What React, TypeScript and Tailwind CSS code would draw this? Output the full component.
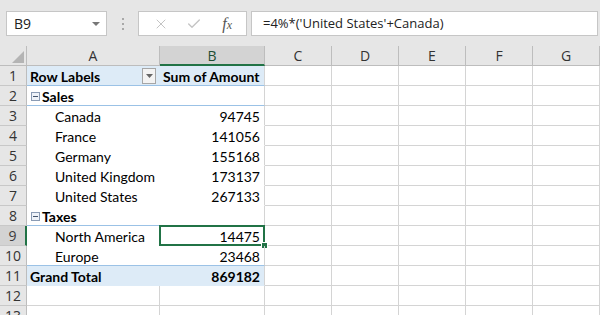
import { X, Check } from "lucide-react"

const cols = [
    { key: "A", w: "w-[133px]" },
    { key: "B", w: "w-[105px]" },
    { key: "C", w: "w-[67px]" },
    { key: "D", w: "w-[67px]" },
    { key: "E", w: "w-[67px]" },
    { key: "F", w: "w-[67px]" },
    { key: "G", w: "w-[67px]" },
]

type Row = {
    n: number
    label?: string
    value?: string
    kind: "head" | "group" | "item" | "total" | "empty"
    line?: boolean
}

const rows: Row[] = [
    { n: 1, label: "Row Labels", value: "Sum of Amount", kind: "head", line: true },
    { n: 2, label: "Sales", kind: "group", line: true },
    { n: 3, label: "Canada", value: "94745", kind: "item" },
    { n: 4, label: "France", value: "141056", kind: "item" },
    { n: 5, label: "Germany", value: "155168", kind: "item" },
    { n: 6, label: "United Kingdom", value: "173137", kind: "item" },
    { n: 7, label: "United States", value: "267133", kind: "item" },
    { n: 8, label: "Taxes", kind: "group", line: true },
    { n: 9, label: "North America", value: "14475", kind: "item" },
    { n: 10, label: "Europe", value: "23468", kind: "item", line: true },
    { n: 11, label: "Grand Total", value: "869182", kind: "total" },
    { n: 12, kind: "empty" },
    { n: 13, kind: "empty" },
]

const cellFont = "font-['Lato','Noto_Sans',sans-serif] text-[14px] text-black whitespace-nowrap"

function Collapse() {
    return (
        <span className="inline-flex items-center justify-center w-[9px] h-[9px] border border-[#8a9bb4] bg-[#eef2f8] mr-[2px] mt-[1px]">
            <span className="block w-[5px] h-px bg-[#45556c]" />
        </span>
    )
}

function FilterButton() {
    return (
        <span className="ml-auto mr-[4px] w-[14px] h-[16px] border border-[#a6a6a6] bg-[#f3f3f3] flex items-center justify-center">
            <svg width="7" height="4" viewBox="0 0 7 4"><path d="M0 0h7L3.5 4z" fill="#666" /></svg>
        </span>
    )
}

function SheetRow({ row }: { row: Row }) {
    const selected = row.n === 9
    const pivot = row.kind !== "empty"
    const blue = row.kind === "head" || row.kind === "total"
    const pivotBorder = row.line ? "border-b border-[#9bc2e6]" : pivot ? "border-b border-transparent" : "border-b border-[#d4d4d4]"
    const bold = row.kind !== "item" ? "font-bold" : ""

    return (
        <div className="flex h-[20px] shrink-0">
            <div className={`w-[27px] shrink-0 flex items-center justify-center border-b border-[#c8c8c8] font-['Open_Sans',sans-serif] text-[14px] ${selected ? "bg-[#d3d3d3] text-[#3c3c3c] border-r-2 border-r-[#217346]" : "bg-[#e6e6e6] text-[#333] border-r border-r-[#bdbdbd]"}`}>
                {row.n}
            </div>
            <div className={`w-[133px] shrink-0 flex items-center pt-[1px] ${pivotBorder} ${pivot ? "" : "border-r border-r-[#d4d4d4]"} ${blue ? "bg-[#ddebf7]" : ""} ${cellFont} ${bold}`}>
                {row.kind === "head" && <><span className="pl-[3px]">{row.label}</span><FilterButton /></>}
                {row.kind === "group" && <span className="pl-[4px] flex items-center"><Collapse />{row.label}</span>}
                {row.kind === "item" && <span className="pl-[28px]">{row.label}</span>}
                {row.kind === "total" && <span className="pl-[3px]">{row.label}</span>}
            </div>
            <div className={`relative w-[105px] shrink-0 flex items-center pt-[1px] border-r border-r-[#d4d4d4] ${pivotBorder} ${blue ? "bg-[#ddebf7]" : ""} ${cellFont} ${bold} ${row.kind === "head" ? "justify-start pl-[3px]" : "justify-end pr-[4px]"}`}>
                {row.value}
                {selected && (
                    <>
                        <div className="absolute left-[-1px] top-[-1px] right-[-1px] bottom-[-1px] border-2 border-[#217346]" />
                        <div className="absolute right-[-4px] bottom-[-4px] w-[7px] h-[7px] bg-[#217346] border border-white" />
                    </>
                )}
            </div>
            {cols.slice(2).map(c => (
                <div key={c.key} className={`${c.w} shrink-0 border-r border-b border-[#d4d4d4]`} />
            ))}
        </div>
    )
}

export default function App() {
    return (
        <div className="w-[600px] h-[315px] overflow-hidden bg-white select-none flex flex-col">
            <div className="h-[46px] shrink-0 bg-[#e6e6e6] flex items-start pt-[11px] font-['Open_Sans',sans-serif]">
                <div className="ml-[6px] w-[101px] h-[25px] bg-white border border-[#c6c6c6] flex items-center">
                    <span className="pl-[7px] text-[14px] text-[#222]">B9</span>
                    <svg className="ml-auto mr-[6px]" width="8" height="4" viewBox="0 0 8 4"><path d="M0 0h8L4 4z" fill="#777" /></svg>
                </div>
                <div className="w-[31px] h-[25px] flex flex-col items-center justify-center gap-[3px]">
                    <span className="w-[2px] h-[2px] bg-[#a8a8a8]" />
                    <span className="w-[2px] h-[2px] bg-[#a8a8a8]" />
                    <span className="w-[2px] h-[2px] bg-[#a8a8a8]" />
                </div>
                <div className="w-[109px] h-[25px] bg-white border border-[#c6c6c6] flex items-center">
                    <X className="ml-[14px] text-[#c4c4c4]" size={16} strokeWidth={1.5} />
                    <Check className="ml-[17px] text-[#c4c4c4]" size={16} strokeWidth={2} />
                    <span className="ml-auto mr-[14px] font-['Liberation_Serif',serif] italic text-[16px] text-[#555]">f<span className="text-[12px]">x</span></span>
                </div>
                <div className="ml-[4px] flex-1 mr-[2px] h-[25px] bg-white border border-[#c6c6c6] flex items-center">
                    <span className="pl-[11px] text-[13px] text-[#222] whitespace-nowrap">=4%*('United States'+Canada)</span>
                </div>
            </div>
            <div className="flex h-[20px] shrink-0 font-['Open_Sans',sans-serif] text-[14px] text-[#333]">
                <div className="w-[27px] shrink-0 bg-[#e6e6e6] border-r border-b border-[#bdbdbd] flex items-end justify-end p-[2px]">
                    <svg width="12" height="12" viewBox="0 0 12 12"><path d="M12 0V12H0z" fill="#b4b4b4" /></svg>
                </div>
                {cols.map(c => (
                    <div key={c.key} className={`${c.w} shrink-0 flex items-center justify-center border-r ${c.key === "B" ? "bg-[#d3d3d3] border-b-2 border-b-[#217346] border-r-[#bdbdbd] text-[#1f4e33]" : "bg-[#e6e6e6] border-b border-[#bdbdbd]"}`}>
                        {c.key}
                    </div>
                ))}
            </div>
            {rows.map(r => <SheetRow key={r.n} row={r} />)}
        </div>
    )
}
